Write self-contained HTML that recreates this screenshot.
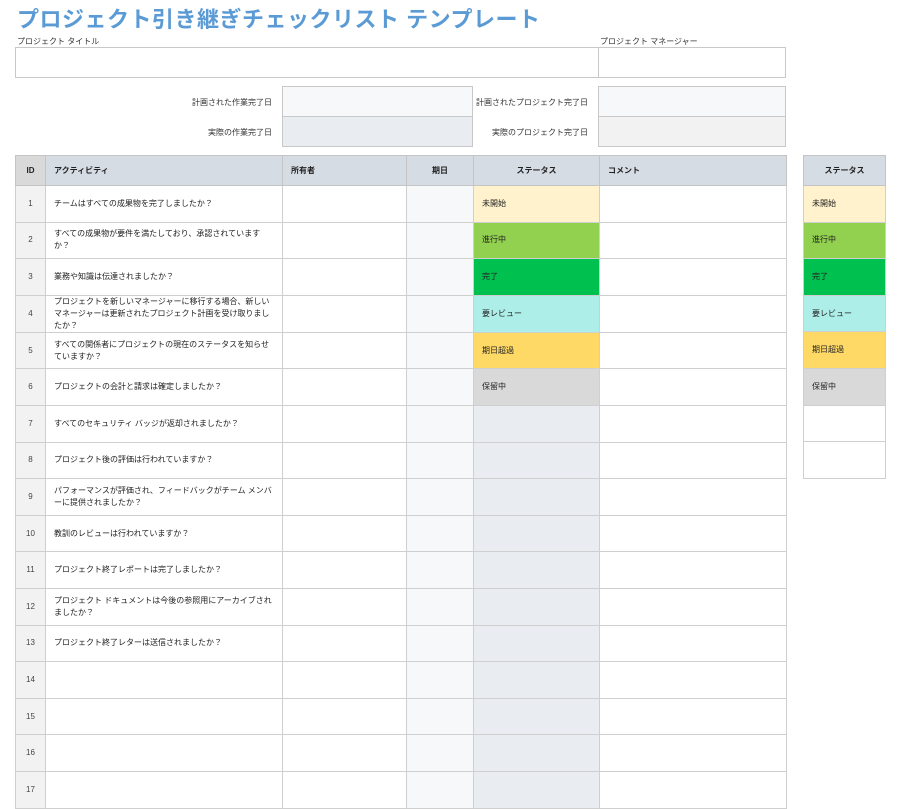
<!DOCTYPE html>
<html><head><meta charset="utf-8"><style>
*{margin:0;padding:0;box-sizing:border-box}
body{width:900px;height:808px;background:#fff;font-family:"Liberation Sans","Noto Sans CJK JP",sans-serif;position:relative;overflow:hidden;color:#222}
.a{position:absolute}
.t{left:17px;top:2px;font-size:22px;font-weight:bold;color:#5b9bd5;white-space:nowrap;letter-spacing:0.5px}
.lb{font-size:8px;color:#333;white-space:nowrap}
.box{border:1px solid #c8c8c8}
table{position:absolute;border-collapse:collapse;table-layout:fixed}
td{border:1px solid #cfcfcf;font-size:8px;height:36.6px;padding:0 8px;vertical-align:middle;line-height:12px}
th{border:1px solid #c4c4c4;background:#d6dce4;font-size:8px;height:30px;font-weight:bold;text-align:left;padding:0 8px}
td.id{background:#f2f2f2;text-align:center;padding:0;color:#444}
td.d{background:#f7f8fa}
td.s{background:#e9ecf0}
.c1{background:#fff2cc!important}.c2{background:#92d050!important}.c3{background:#00c050!important}.c4{background:#aeeee8!important}.c5{background:#ffd966!important}.c6{background:#d9d9d9!important}
</style></head><body>
<div class="a t">プロジェクト引き継ぎチェックリスト テンプレート</div>
<div class="a lb" style="left:17px;top:36px">プロジェクト タイトル</div>
<div class="a lb" style="left:600px;top:36px">プロジェクト マネージャー</div>
<div class="a box" style="left:15px;top:47px;width:584px;height:31px;border-right:none"></div>
<div class="a box" style="left:598px;top:47px;width:188px;height:31px"></div>
<div class="a lb" style="left:150px;top:97px;width:122px;text-align:right">計画された作業完了日</div>
<div class="a lb" style="left:150px;top:127px;width:122px;text-align:right">実際の作業完了日</div>
<div class="a box" style="left:282px;top:86px;width:191px;height:31px;background:#f7f8fa"></div>
<div class="a box" style="left:282px;top:116px;width:191px;height:31px;background:#e9ecf0"></div>
<div class="a lb" style="left:470px;top:97px;width:118px;text-align:right">計画されたプロジェクト完了日</div>
<div class="a lb" style="left:470px;top:127px;width:118px;text-align:right">実際のプロジェクト完了日</div>
<div class="a box" style="left:598px;top:86px;width:188px;height:31px;background:#f7f8fa"></div>
<div class="a box" style="left:598px;top:116px;width:188px;height:31px;background:#f2f2f2"></div>

<table style="left:15px;top:155px;width:771px">
<colgroup><col style="width:30px"><col style="width:237px"><col style="width:124px"><col style="width:67px"><col style="width:126px"><col style="width:187px"></colgroup>
<tr><th style="background:#d9d9d9;text-align:center;padding:0">ID</th><th>アクティビティ</th><th>所有者</th><th style="text-align:center">期日</th><th style="text-align:center">ステータス</th><th>コメント</th></tr>
<tr><td class="id">1</td><td>チームはすべての成果物を完了しましたか？</td><td></td><td class="d"></td><td class="s c1">未開始</td><td></td></tr>
<tr><td class="id">2</td><td>すべての成果物が要件を満たしており、承認されていますか？</td><td></td><td class="d"></td><td class="s c2">進行中</td><td></td></tr>
<tr><td class="id">3</td><td>業務や知識は伝達されましたか？</td><td></td><td class="d"></td><td class="s c3">完了</td><td></td></tr>
<tr><td class="id">4</td><td>プロジェクトを新しいマネージャーに移行する場合、新しいマネージャーは更新されたプロジェクト計画を受け取りましたか？</td><td></td><td class="d"></td><td class="s c4">要レビュー</td><td></td></tr>
<tr><td class="id">5</td><td>すべての関係者にプロジェクトの現在のステータスを知らせていますか？</td><td></td><td class="d"></td><td class="s c5">期日超過</td><td></td></tr>
<tr><td class="id">6</td><td>プロジェクトの会計と請求は確定しましたか？</td><td></td><td class="d"></td><td class="s c6">保留中</td><td></td></tr>
<tr><td class="id">7</td><td>すべてのセキュリティ バッジが返却されましたか？</td><td></td><td class="d"></td><td class="s"></td><td></td></tr>
<tr><td class="id">8</td><td>プロジェクト後の評価は行われていますか？</td><td></td><td class="d"></td><td class="s"></td><td></td></tr>
<tr><td class="id">9</td><td>パフォーマンスが評価され、フィードバックがチーム メンバーに提供されましたか？</td><td></td><td class="d"></td><td class="s"></td><td></td></tr>
<tr><td class="id">10</td><td>教訓のレビューは行われていますか？</td><td></td><td class="d"></td><td class="s"></td><td></td></tr>
<tr><td class="id">11</td><td>プロジェクト終了レポートは完了しましたか？</td><td></td><td class="d"></td><td class="s"></td><td></td></tr>
<tr><td class="id">12</td><td>プロジェクト ドキュメントは今後の参照用にアーカイブされましたか？</td><td></td><td class="d"></td><td class="s"></td><td></td></tr>
<tr><td class="id">13</td><td>プロジェクト終了レターは送信されましたか？</td><td></td><td class="d"></td><td class="s"></td><td></td></tr>
<tr><td class="id">14</td><td></td><td></td><td class="d"></td><td class="s"></td><td></td></tr>
<tr><td class="id">15</td><td></td><td></td><td class="d"></td><td class="s"></td><td></td></tr>
<tr><td class="id">16</td><td></td><td></td><td class="d"></td><td class="s"></td><td></td></tr>
<tr><td class="id">17</td><td></td><td></td><td class="d"></td><td class="s"></td><td></td></tr>
</table>

<table style="left:803px;top:155px;width:83px">
<tr><th style="text-align:center">ステータス</th></tr>
<tr><td class="c1">未開始</td></tr>
<tr><td class="c2">進行中</td></tr>
<tr><td class="c3">完了</td></tr>
<tr><td class="c4">要レビュー</td></tr>
<tr><td class="c5">期日超過</td></tr>
<tr><td class="c6">保留中</td></tr>
<tr><td></td></tr>
<tr><td></td></tr>
</table>
</body></html>
